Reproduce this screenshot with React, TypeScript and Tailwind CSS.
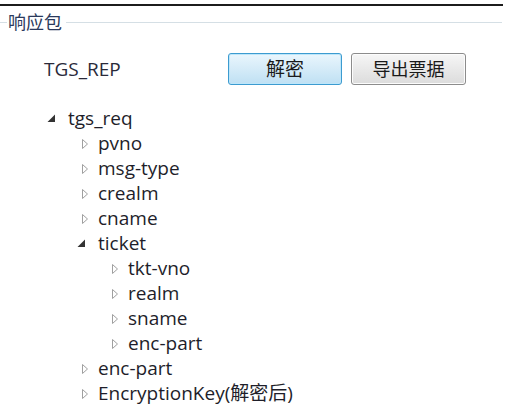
import React from 'react';

type Node = { label: string; level: number; open?: boolean };

const rows: Node[] = [
  { label: 'tgs_req', level: 0, open: true },
  { label: 'pvno', level: 1 },
  { label: 'msg-type', level: 1 },
  { label: 'crealm', level: 1 },
  { label: 'cname', level: 1 },
  { label: 'ticket', level: 1, open: true },
  { label: 'tkt-vno', level: 2 },
  { label: 'realm', level: 2 },
  { label: 'sname', level: 2 },
  { label: 'enc-part', level: 2 },
  { label: 'enc-part', level: 1 },
  { label: 'EncryptionKey(解密后)', level: 1 },
];

function Caret({ open }: { open?: boolean }) {
  if (open) {
    return (
      <svg width="9" height="9" viewBox="0 0 9 9" className="shrink-0 -ml-[3px]">
        <polygon points="8,0.5 8,8 0.5,8" fill="#333" />
      </svg>
    );
  }
  return (
    <svg width="8" height="12" viewBox="0 0 8 12" className="shrink-0 ml-px">
      <polygon points="1.5,1.5 6.5,6 1.5,10.5" fill="none" stroke="#a0a0a0" strokeWidth="1" />
    </svg>
  );
}

const indent = ['pl-[50px]', 'pl-[80px]', 'pl-[110px]'];

export default function App() {
  return (
    <div
      className="w-[508px] h-[416px] bg-white overflow-hidden text-[#1e1e2a]"
      style={{ fontFamily: '"Open Sans", "Noto Sans CJK SC", sans-serif' }}
    >
      {/* window edge */}
      <div className="pt-[4px]">
        <div className="w-[503px] h-[2px] bg-[#1c1c1c]" />
      </div>

      {/* group box header */}
      <div className="flex items-center h-[26px] mt-[3px]">
        <div className="w-[7px] h-px bg-[#d5dfe5]" />
        <span className="px-[1px] text-[18px] leading-none text-[#2b3a5c]">响应包</span>
        <div className="w-[436px] h-px bg-[#d5dfe5] ml-[3px]" />
      </div>

      {/* header row */}
      <div className="flex items-center mt-[17px] h-[34px]">
        <span className="pl-[44px] w-[228px] text-[19px] text-[#2a2a3a]">TGS_REP</span>
        <button className="w-[114px] h-[32px] rounded-[3px] border border-[#3c9bd0] bg-gradient-to-b from-[#eaf6fd] to-[#bfe0f3] text-[19px] leading-none text-[#1a1a1a] shadow-[inset_0_0_0_1px_#bde6fa]">
          解密
        </button>
        <button className="ml-[9px] w-[115px] h-[32px] rounded-[3px] border border-[#8c8c8c] bg-gradient-to-b from-[#f6f6f6] to-[#dcdcdc] text-[18px] leading-none text-[#1a1a1a] shadow-[inset_0_0_0_1px_#fcfcfc]">
          导出票据
        </button>
      </div>

      {/* tree */}
      <div className="mt-[20px]">
        {rows.map((r, i) => (
          <div key={i} className={`flex items-center h-[25px] ${indent[r.level]}`}>
            <div className="w-[18px] flex items-center">
              <Caret open={r.open} />
            </div>
            <span className="text-[19px] leading-none">{r.label}</span>
          </div>
        ))}
      </div>
    </div>
  );
}
